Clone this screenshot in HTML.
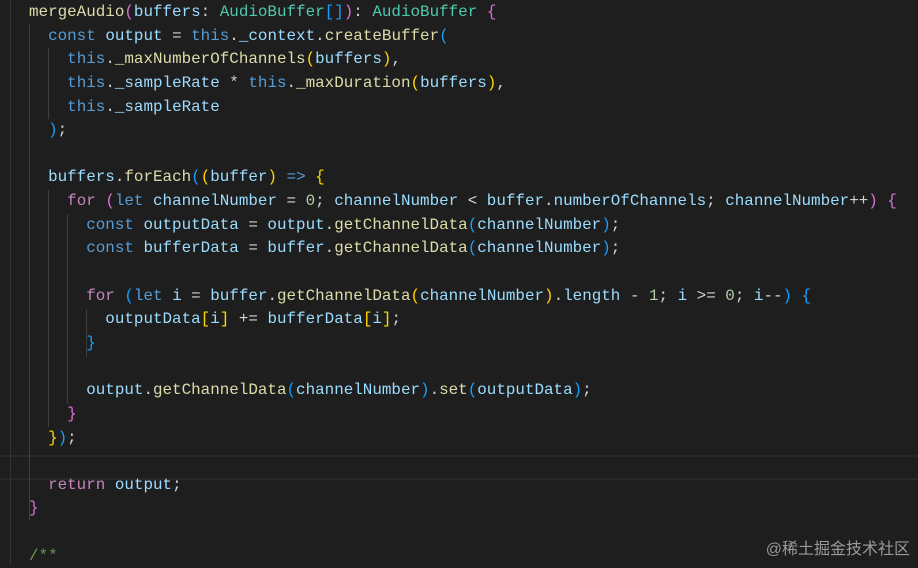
<!DOCTYPE html>
<html><head><meta charset="utf-8"><style>
html,body{margin:0;padding:0;background:#1e1e1e;width:918px;height:565px;overflow:hidden}
.c{position:absolute;left:29px;top:1px;font-family:"Liberation Mono",monospace;font-size:15.9px;color:#d4d4d4}
.l{height:23.65px;line-height:23.65px;white-space:pre}
.f{color:#dcdcaa}.v{color:#9cdcfe}.k{color:#569cd6}.t{color:#4ec9b0}.x{color:#c586c0}.n{color:#b5cea8}.cm{color:#6a9955}
.g{color:#ffd700}.o{color:#da70d6}.b{color:#179fff}
.hl{position:absolute;left:0;width:918px;top:455px;height:21px;border-top:2px solid #282828;border-bottom:2px solid #282828}
.ig{position:absolute;width:1px;background:#404040}
.wm{position:absolute;right:8px;bottom:6px;font-family:"Liberation Sans","Noto Sans CJK SC",sans-serif;font-size:16px;color:#9a9a9a}
</style></head><body>
<div class="hl"></div>
<div class="ig" style="left:10px;top:0;height:565px;background:#333"></div>
<div class="ig" style="left:29px;top:25px;height:495px"></div>
<div class="ig" style="left:48px;top:48px;height:71px"></div>
<div class="ig" style="left:48px;top:190px;height:237px"></div>
<div class="ig" style="left:67px;top:214px;height:190px"></div>
<div class="ig" style="left:86px;top:309px;height:48px"></div>
<div class="c"><div class="l"><span class="f">mergeAudio</span><span class="o">(</span><span class="v">buffers</span>: <span class="t">AudioBuffer</span><span class="b">[]</span><span class="o">)</span>: <span class="t">AudioBuffer</span> <span class="o">{</span></div><div class="l">  <span class="k">const</span> <span class="v">output</span> = <span class="k">this</span>.<span class="v">_context</span>.<span class="f">createBuffer</span><span class="b">(</span></div><div class="l">    <span class="k">this</span>.<span class="f">_maxNumberOfChannels</span><span class="g">(</span><span class="v">buffers</span><span class="g">)</span>,</div><div class="l">    <span class="k">this</span>.<span class="v">_sampleRate</span> * <span class="k">this</span>.<span class="f">_maxDuration</span><span class="g">(</span><span class="v">buffers</span><span class="g">)</span>,</div><div class="l">    <span class="k">this</span>.<span class="v">_sampleRate</span></div><div class="l">  <span class="b">)</span>;</div><div class="l"> </div><div class="l">  <span class="v">buffers</span>.<span class="f">forEach</span><span class="b">(</span><span class="g">(</span><span class="v">buffer</span><span class="g">)</span> <span class="k">=&gt;</span> <span class="g">{</span></div><div class="l">    <span class="x">for</span> <span class="o">(</span><span class="k">let</span> <span class="v">channelNumber</span> = <span class="n">0</span>; <span class="v">channelNumber</span> &lt; <span class="v">buffer</span>.<span class="v">numberOfChannels</span>; <span class="v">channelNumber</span>++<span class="o">)</span> <span class="o">{</span></div><div class="l">      <span class="k">const</span> <span class="v">outputData</span> = <span class="v">output</span>.<span class="f">getChannelData</span><span class="b">(</span><span class="v">channelNumber</span><span class="b">)</span>;</div><div class="l">      <span class="k">const</span> <span class="v">bufferData</span> = <span class="v">buffer</span>.<span class="f">getChannelData</span><span class="b">(</span><span class="v">channelNumber</span><span class="b">)</span>;</div><div class="l"> </div><div class="l">      <span class="x">for</span> <span class="b">(</span><span class="k">let</span> <span class="v">i</span> = <span class="v">buffer</span>.<span class="f">getChannelData</span><span class="g">(</span><span class="v">channelNumber</span><span class="g">)</span>.<span class="v">length</span> - <span class="n">1</span>; <span class="v">i</span> &gt;= <span class="n">0</span>; <span class="v">i</span>--<span class="b">)</span> <span class="b">{</span></div><div class="l">        <span class="v">outputData</span><span class="g">[</span><span class="v">i</span><span class="g">]</span> += <span class="v">bufferData</span><span class="g">[</span><span class="v">i</span><span class="g">]</span>;</div><div class="l">      <span class="b">}</span></div><div class="l"> </div><div class="l">      <span class="v">output</span>.<span class="f">getChannelData</span><span class="b">(</span><span class="v">channelNumber</span><span class="b">)</span>.<span class="f">set</span><span class="b">(</span><span class="v">outputData</span><span class="b">)</span>;</div><div class="l">    <span class="o">}</span></div><div class="l">  <span class="g">}</span><span class="b">)</span>;</div><div class="l"> </div><div class="l">  <span class="x">return</span> <span class="v">output</span>;</div><div class="l"><span class="o">}</span></div><div class="l"> </div><div class="l"><span class="cm">/**</span></div></div>
<div class="wm">@稀土掘金技术社区</div>
</body></html>
